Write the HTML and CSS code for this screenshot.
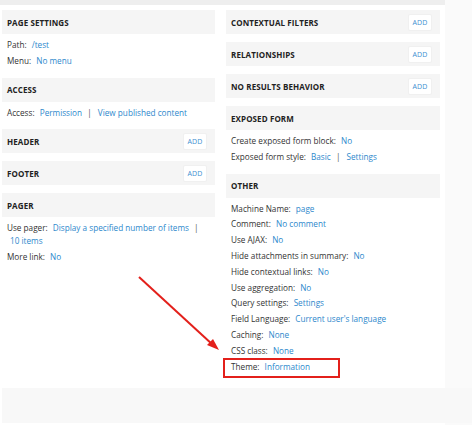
FILE: index.html
```html
<!DOCTYPE html>
<html>
<head>
<meta charset="utf-8">
<link rel="stylesheet" href="styles.css">
</head>
<body>
<div class="screen">
  <div class="topbar"></div>
  <div class="panel">
    <div class="col">
      <section class="sec">
        <div class="hd">PAGE SETTINGS</div>
        <div class="bd">
          <div class="it">Path: <a>/test</a></div>
          <div class="it">Menu: <a>No menu</a></div>
        </div>
      </section>
      <section class="sec">
        <div class="hd">ACCESS</div>
        <div class="bd">
          <div class="it">Access: <a>Permission</a> <span class="sep">|</span> <a>View published content</a></div>
        </div>
      </section>
      <section class="sec">
        <div class="hd">HEADER <span class="add">ADD</span></div>
      </section>
      <section class="sec">
        <div class="hd">FOOTER <span class="add">ADD</span></div>
      </section>
      <section class="sec">
        <div class="hd">PAGER</div>
        <div class="bd">
          <div class="it wrap">Use pager: <a>Display a specified number of items</a> <span class="sep">|</span> <a>10 items</a></div>
          <div class="it">More link: <a>No</a></div>
        </div>
      </section>
    </div>
    <div class="col">
      <section class="sec">
        <div class="hd">CONTEXTUAL FILTERS <span class="add">ADD</span></div>
      </section>
      <section class="sec">
        <div class="hd">RELATIONSHIPS <span class="add">ADD</span></div>
      </section>
      <section class="sec">
        <div class="hd">NO RESULTS BEHAVIOR <span class="add">ADD</span></div>
      </section>
      <section class="sec">
        <div class="hd">EXPOSED FORM</div>
        <div class="bd">
          <div class="it">Create exposed form block: <a>No</a></div>
          <div class="it">Exposed form style: <a>Basic</a> <span class="sep">|</span> <a>Settings</a></div>
        </div>
      </section>
      <section class="sec">
        <div class="hd">OTHER</div>
        <div class="bd">
          <div class="it">Machine Name: <a>page</a></div>
          <div class="it">Comment: <a>No comment</a></div>
          <div class="it">Use AJAX: <a>No</a></div>
          <div class="it">Hide attachments in summary: <a>No</a></div>
          <div class="it">Hide contextual links: <a>No</a></div>
          <div class="it">Use aggregation: <a>No</a></div>
          <div class="it">Query settings: <a>Settings</a></div>
          <div class="it">Field Language: <a>Current user's language</a></div>
          <div class="it">Caching: <a>None</a></div>
          <div class="it">CSS class: <a>None</a></div>
          <div class="it marked">Theme: <a>Information</a><span class="box"></span></div>
        </div>
      </section>
    </div>
  </div>
  <div class="footer"></div>
  <svg class="arrow" width="474" height="425" viewBox="0 0 474 425">
    <line x1="139" y1="277" x2="213" y2="345" stroke="#e3201b" stroke-width="2"/>
    <polygon points="219,350 207,345 213,339" fill="#e3201b"/>
  </svg>
</div>
</body>
</html>
```
FILE: styles.css
```css
* { box-sizing: border-box; }
html, body { margin: 0; padding: 0; }
body {
  background: #ffffff;
  font-family: "Open Sans", "DejaVu Sans", sans-serif;
  font-size: 8.2px;
  color: #333;
}
.screen {
  position: relative;
  width: 474px;
  height: 425px;
  background: linear-gradient(to right, #ffffff 0, #ffffff 445px, #fafafa 445px, #fafafa 472px, #ffffff 472px);
}
.topbar {
  height: 5px;
  width: 445px;
  background: #eeeeee;
}
.panel {
  width: 445px;
  height: 383px;
  background: #fff;
  padding: 5px 5px 0 2px;
  display: grid;
  grid-template-columns: 213px 214px;
  column-gap: 11px;
  align-items: start;
}
.sec { margin-bottom: 8px; }
.hd {
  height: 24px;
  background: #f5f5f5;
  display: flex;
  align-items: center;
  justify-content: space-between;
  padding: 0 8px 0 5px;
  font-weight: 700;
  font-size: 8px;
  color: #222;
  letter-spacing: 0.1px;
}
.add {
  background: #fff;
  border: 1px solid #f0f0f0;
  color: #3d8fd1;
  font-weight: 400;
  font-size: 7px;
  width: 24px;
  height: 17px;
  display: flex;
  align-items: center;
  justify-content: center;
  border-radius: 2px;
}
.bd { padding: 3px 5px 1px 5px; }
.it { line-height: 15.8px; }
.it.wrap { line-height: 13px; margin: 1px 0 2px; }
.it a { color: #2d88cc; margin-left: 3px; }
.sep { color: #555; margin: 0 1px 0 3px; }
.marked { position: relative; }
.box {
  position: absolute;
  left: -8px;
  top: -1px;
  width: 117px;
  height: 20px;
  border: 2px solid #e3201b;
}
.footer {
  margin-left: 2px;
  width: 470px;
  height: 35px;
  background: #f8f8f8;
}
.arrow { position: absolute; left: 0; top: 0; pointer-events: none; }
```
